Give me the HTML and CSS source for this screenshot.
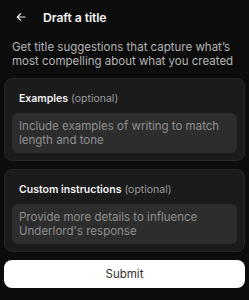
FILE: index.html
```html
<!DOCTYPE html>
<html>
<head>
<meta charset="utf-8">
<link rel="stylesheet" href="styles.css">
</head>
<body>
<div class="page">
  <header class="header">
    <span class="back">
      <svg width="10" height="10" viewBox="0 0 10 10"><path d="M9 5H1.5M4.6 1.8L1.3 5l3.3 3.2" fill="none" stroke="#e6e6e6" stroke-width="1.2" stroke-linecap="round" stroke-linejoin="round"/></svg>
    </span>
    <h1 class="title">Draft a title</h1>
  </header>
  <p class="desc">Get title suggestions that capture what’s most compelling about what you created</p>
  <section class="card">
    <div class="card-label"><b>Examples</b> <span class="opt">(optional)</span></div>
    <div class="field">Include examples of writing to match length and tone</div>
  </section>
  <section class="card">
    <div class="card-label"><b>Custom instructions</b> <span class="opt">(optional)</span></div>
    <div class="field">Provide more details to influence Underlord's response</div>
  </section>
  <button class="submit">Submit</button>
</div>
</body>
</html>
```
FILE: styles.css
```css
html, body {
  margin: 0;
  padding: 0;
  background: #0c0c0d;
}
body {
  font-family: Inter, "Noto Sans", sans-serif;
  color: #ececec;
}
.page {
  display: flex;
  flex-direction: column;
  padding: 0 4px;
  width: 249px;
  box-sizing: border-box;
}
.header {
  display: flex;
  align-items: center;
  height: 34px;
  padding-left: 12px;
}
.back {
  display: flex;
  width: 10px;
  height: 10px;
  margin-right: 17px;
}
.title {
  margin: 0;
  font-size: 12.25px;
  font-weight: 600;
  color: #f2f2f2;
  letter-spacing: -0.1px;
}
.desc {
  margin: 6px 0 0 8px;
  font-size: 11.5px;
  line-height: 14px;
  color: #b4b4b4;
  height: 38px;
}
.card {
  background: #1b1b1c;
  border: 1px solid #272728;
  border-radius: 8px;
  padding: 0 7px 7px;
  margin-bottom: 8px;
}
.card-label {
  font-size: 10.5px;
  line-height: 16px;
  padding: 12px 7px 6px;
  color: #f0f0f0;
}
.card-label b {
  font-weight: 600;
}
.opt {
  color: #9a9a9a;
}
.field {
  background: #2d2d2e;
  border-radius: 6px;
  padding: 6px 7px;
  font-size: 11.5px;
  line-height: 14px;
  color: #8f8f8f;
  min-height: 28px;
}
.submit {
  font-family: Inter, "Noto Sans", sans-serif;
  height: 28px;
  border: none;
  border-radius: 8px;
  background: #ffffff;
  color: #2e2e2e;
  font-size: 11.5px;
  padding: 0;
}
```
